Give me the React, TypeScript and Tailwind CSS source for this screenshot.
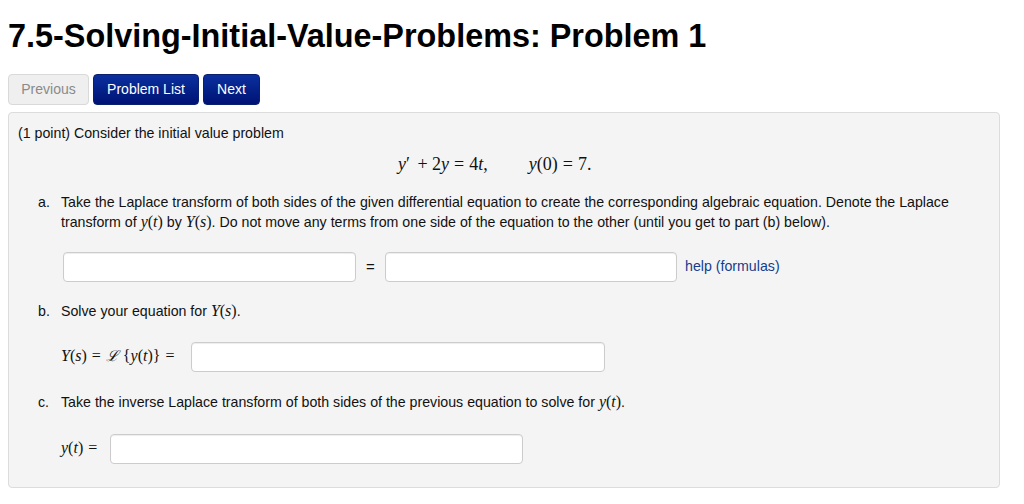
const sans = { fontFamily: '"Liberation Sans", Arial, sans-serif' };

function M({ children, big }: { children: React.ReactNode; big?: boolean }) {
  return (
    <span className={`font-['Liberation_Serif',serif] leading-none ${big ? "text-[18px]" : "text-[16px]"}`}>
      {children}
    </span>
  );
}

function I({ children }: { children: React.ReactNode }) {
  return <span className="italic">{children}</span>;
}

function Op({ children, rel }: { children: React.ReactNode; rel?: boolean }) {
  return <span className={rel ? "mx-[5px]" : "mx-[4.5px]"}>{children}</span>;
}

function Field({ w }: { w: string }) {
  return (
    <div
      className={`${w} h-[30px] rounded-[4px] border border-[#cccccc] bg-white shadow-[inset_0_1px_1px_rgba(0,0,0,0.075)]`}
    />
  );
}

export default function App() {
  return (
    <div
      className="w-[1024px] h-[504px] bg-white px-2 text-[14.2px] text-[#111] overflow-hidden"
      style={sans}
    >
      <h1 className="pt-[17px] text-[32.4px] leading-[38px] font-bold text-black">
        7.5-Solving-Initial-Value-Problems: Problem 1
      </h1>

      <div className="mt-[19px] flex gap-1 text-[14px]">
        <button className="h-[31px] w-[81px] rounded-[4px] border border-[#d9d9d9] bg-[#efefef] text-[#8a8a8a]">
          Previous
        </button>
        <button className="h-[31px] w-[106px] rounded-[4px] border border-[#0a1f6e] bg-gradient-to-b from-[#0c2f9e] to-[#011275] text-white">
          Problem List
        </button>
        <button className="h-[31px] w-[57px] rounded-[4px] border border-[#0a1f6e] bg-gradient-to-b from-[#0c2f9e] to-[#011275] text-white">
          Next
        </button>
      </div>

      <div className="mt-[7px] w-[992px] h-[376px] rounded-[4px] border border-[#dcdcdc] bg-[#f4f4f4] pl-[9px] pt-[10px]">
        <p className="leading-[20px]">(1 point) Consider the initial value problem</p>

        <div className="mt-[13px] flex h-[20px] items-center">
          <span className="ml-[380px]">
            <M big>
              <I>y</I>′<span className="ml-[3px]" />
              <Op>+</Op>2<I>y</I>
              <Op rel>=</Op>4<I>t</I>,
            </M>
          </span>
          <span className="ml-[41px]">
            <M big>
              <I>y</I>(0)<Op rel>=</Op>7.
            </M>
          </span>
        </div>

        <div className="mt-[16px] flex">
          <span className="w-[43px] shrink-0 pl-[20px]">a.</span>
          <div className="w-[930px] leading-[20px]">
            Take the Laplace transform of both sides of the given differential equation to create the corresponding
            algebraic equation. Denote the Laplace transform of{" "}
            <M>
              <I>y</I>(<I>t</I>)
            </M>{" "}
            by{" "}
            <M>
              <I>Y</I>(<I>s</I>)
            </M>
            . Do not move any terms from one side of the equation to the other (until you get to part (b) below).
          </div>
        </div>

        <div className="mt-[20px] flex items-center pl-[45px]">
          <Field w="w-[293px]" />
          <span className="w-[29px] text-center text-[15px]">=</span>
          <Field w="w-[292px]" />
          <a className="ml-[8px] text-[#143d8d]">help (formulas)</a>
        </div>

        <div className="mt-[20px] flex h-[20px] items-center">
          <span className="w-[43px] pl-[20px]">b.</span>
          <span>
            Solve your equation for{" "}
            <M>
              <I>Y</I>(<I>s</I>)
            </M>
            .
          </span>
        </div>

        <div className="mt-[20px] flex items-center pl-[43px]">
          <span className="w-[130px]">
            <M>
              <I>Y</I>(<I>s</I>)<Op rel>=</Op>
              <span className="font-['DejaVu_Serif',serif] text-[15px] italic">ℒ</span>
              <span className="ml-[5px]">{"{"}</span>
              <I>y</I>(<I>t</I>){"}"}
              <Op rel>=</Op>
            </M>
          </span>
          <Field w="w-[414px]" />
        </div>

        <div className="mt-[21px] flex h-[20px] items-center">
          <span className="w-[43px] pl-[20px]">c.</span>
          <span>
            Take the inverse Laplace transform of both sides of the previous equation to solve for{" "}
            <M>
              <I>y</I>(<I>t</I>)
            </M>
            .
          </span>
        </div>

        <div className="mt-[21px] flex items-center pl-[43px]">
          <span className="w-[49px]">
            <M>
              <I>y</I>(<I>t</I>)<Op rel>=</Op>
            </M>
          </span>
          <Field w="w-[413px]" />
        </div>
      </div>
    </div>
  );
}
